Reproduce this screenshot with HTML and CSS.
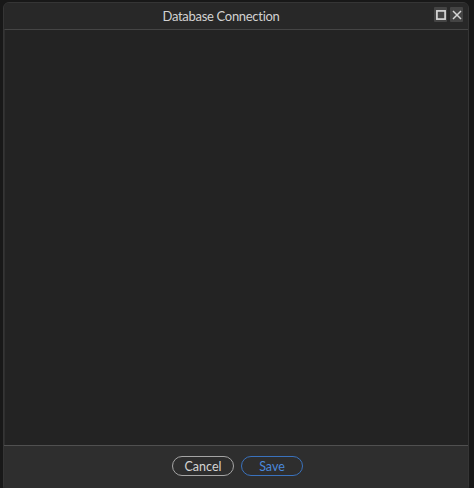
FILE: index.html
```
<!DOCTYPE html>
<html>
<head>
<meta charset="utf-8">
<link rel="stylesheet" href="styles.css">
</head>
<body>
<div class="window">
  <div class="titlebar">
    <span class="title">Database Connection</span>
    <div class="controls">
      <button class="ctl" aria-label="Maximize">
        <svg width="10" height="10" viewBox="0 0 10 10"><rect x="0.9" y="0.9" width="8.2" height="8.2" fill="none" stroke="#d6d6d6" stroke-width="1.7"/></svg>
      </button>
      <button class="ctl" aria-label="Close">
        <svg width="10" height="10" viewBox="0 0 10 10"><path d="M1 1L9 9M9 1L1 9" stroke="#d6d6d6" stroke-width="1.5"/></svg>
      </button>
    </div>
  </div>
  <div class="content"></div>
  <div class="footer">
    <button class="btn cancel">Cancel</button>
    <button class="btn save">Save</button>
  </div>
</div>
</body>
</html>
```
FILE: styles.css
```
html, body {
  margin: 0;
  padding: 0;
  background: #181818;
  height: 488px;
  overflow: hidden;
  font-family: "Lato", "Open Sans", sans-serif;
}
.window {
  margin: 2px 5px 0 3px;
  height: 490px;
  background: #282828;
  border: 1px solid #353535;
  border-radius: 6px;
  display: flex;
  flex-direction: column;
  box-sizing: border-box;
  overflow: hidden;
}
.titlebar {
  height: 26px;
  flex: none;
  display: flex;
  align-items: center;
  justify-content: center;
  position: relative;
  background: #282828;
  padding-right: 30px;
}
.title {
  color: #d2d2d2;
  font-size: 13px;
  letter-spacing: -0.3px;
}
.controls {
  position: absolute;
  right: 5px;
  top: 4px;
  display: flex;
  gap: 3px;
}
.ctl {
  width: 13px;
  height: 15px;
  padding: 0;
  border: none;
  background: #444;
  display: flex;
  align-items: center;
  justify-content: center;
  border-radius: 1px;
}
.content {
  flex: 1;
  background: #232323;
  border-top: 1px solid #454545;
  border-left: 1px solid #2f2f2f;
}
.footer {
  height: 46px;
  flex: none;
  background: #2e2e2e;
  border-top: 1px solid #505050;
  display: flex;
  justify-content: center;
  gap: 7px;
  padding-top: 10px;
  padding-left: 3px;
  box-sizing: border-box;
}
.btn {
  width: 62px;
  height: 20px;
  border-radius: 10px;
  background: transparent;
  font-family: "Lato", "Open Sans", sans-serif;
  font-size: 12.5px;
  padding: 0;
  box-sizing: border-box;
}
.cancel {
  border: 1.5px solid #a5a5a5;
  color: #d4d4d4;
}
.save {
  border: 1.5px solid #3a72bd;
  color: #4a88dc;
}
```
